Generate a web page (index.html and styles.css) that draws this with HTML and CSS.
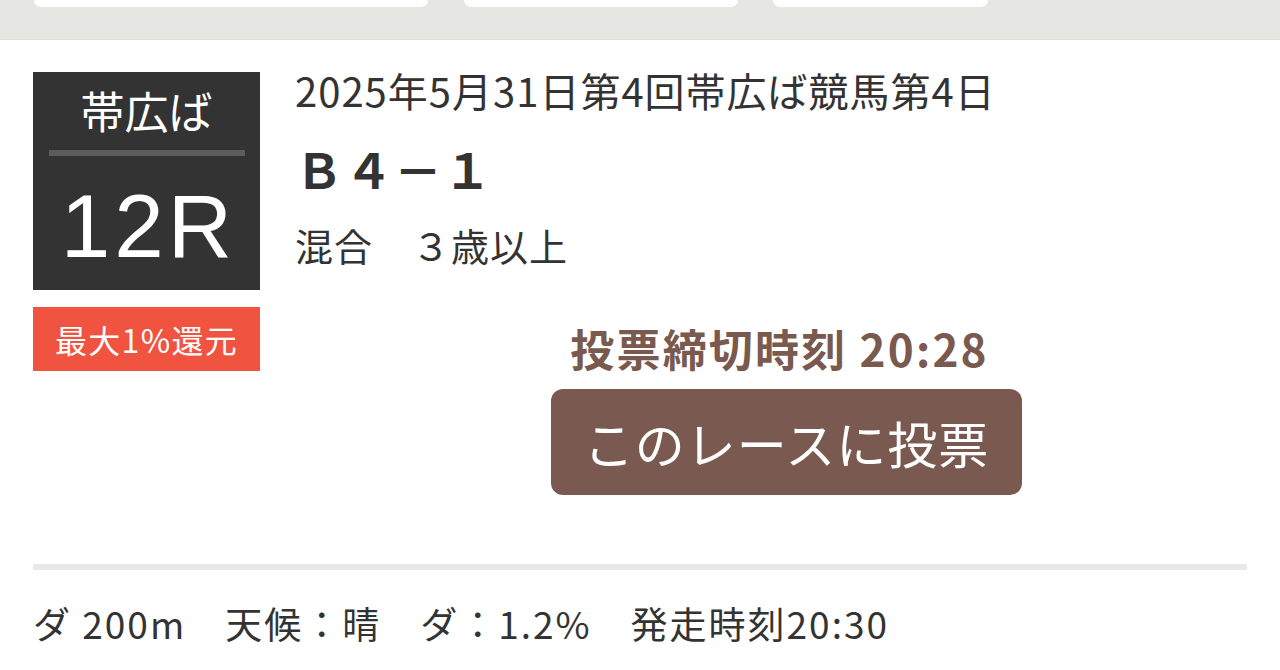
FILE: index.html
```html
<!DOCTYPE html>
<html lang="ja">
<head>
<meta charset="utf-8">
<link rel="stylesheet" href="styles.css">
</head>
<body>
<div class="topbar">
  <div class="tab tab-1"></div>
  <div class="tab tab-2"></div>
  <div class="tab tab-3"></div>
</div>
<main class="race">
  <div class="race-head">
    <div class="left-col">
      <div class="venue-card">
        <div class="venue-name">帯広ば</div>
        <div class="venue-rule"></div>
        <div class="race-no">12R</div>
      </div>
      <div class="badge">最大1%還元</div>
    </div>
    <div class="right-col">
      <div class="race-date">2025年5月31日第4回帯広ば競馬第4日</div>
      <div class="race-title">Ｂ４－１</div>
      <div class="race-cond">混合　３歳以上</div>
      <div class="action">
        <div class="deadline">投票締切時刻 20:28</div>
        <button class="vote-btn">このレースに投票</button>
      </div>
    </div>
  </div>
  <div class="divider"></div>
  <div class="race-info">ダ 200m　天候：晴　ダ：1.2%　発走時刻20:30</div>
</main>
</body>
</html>
```
FILE: styles.css
```css
html, body {
  margin: 0;
  padding: 0;
  background: #ffffff;
}
body {
  width: 1280px;
  height: 670px;
  overflow: hidden;
  font-family: "Noto Sans CJK JP", "Noto Sans", sans-serif;
  color: #333333;
}
.topbar {
  height: 39px;
  background: #e6e6e2;
  border-bottom: 1px solid #e0e0dc;
  display: flex;
  align-items: flex-start;
  padding-left: 34px;
  gap: 36px;
}
.tab {
  height: 7px;
  background: #ffffff;
  border-radius: 0 0 10px 10px;
}
.tab-1 { width: 394px; }
.tab-2 { width: 274px; }
.tab-3 { width: 215px; margin-left: -1px; }

.race {
  padding: 0 33px;
}
.race-head {
  display: flex;
  gap: 35px;
  padding-top: 32px;
  height: 492px;
  box-sizing: border-box;
}
.left-col {
  width: 227px;
  flex: none;
}
.venue-card {
  height: 218px;
  background: #333333;
  display: flex;
  flex-direction: column;
  align-items: center;
}
.venue-name {
  color: #ffffff;
  font-size: 44px;
  line-height: 1;
  margin-top: 16px;
  height: 62px;
}
.venue-rule {
  width: 196px;
  height: 6px;
  background: #5c5c5c;
}
.race-no {
  color: #ffffff;
  font-family: "Liberation Sans", Arial, sans-serif;
  font-size: 89px;
  line-height: 1;
  margin-top: 26px;
  letter-spacing: 4px;
  margin-right: -4px;
}
.badge {
  margin-top: 17px;
  height: 64px;
  background: #f0533f;
  color: #ffffff;
  font-size: 32px;
  letter-spacing: 1.3px;
  line-height: 64px;
  text-align: center;
}
.right-col {
  flex: 1;
  display: flex;
  flex-direction: column;
}
.race-date {
  font-size: 40px;
  line-height: 48px;
  margin-top: -6px;
  letter-spacing: 1px;
}
.race-title {
  font-size: 48px;
  font-weight: bold;
  line-height: 56px;
  margin-top: 26px;
  letter-spacing: 1.5px;
}
.race-cond {
  font-size: 38px;
  line-height: 48px;
  margin-top: 25px;
  letter-spacing: 1px;
}
.action {
  margin-left: 256px;
  width: 471px;
  display: flex;
  flex-direction: column;
  align-items: center;
  margin-top: 53px;
}
.deadline {
  color: #7a5a4e;
  font-size: 44px;
  font-weight: bold;
  line-height: 52px;
  letter-spacing: 2.2px;
  margin-left: -14px;
}
.vote-btn {
  margin-top: 15px;
  width: 471px;
  height: 106px;
  border: none;
  border-radius: 12px;
  background: #7a5a50;
  color: #ffffff;
  font-family: "Noto Sans CJK JP", "Noto Sans", sans-serif;
  font-size: 50px;
  letter-spacing: 1px;
  padding: 0;
}
.divider {
  height: 6px;
  background: #e8e8e8;
  margin-top: 32px;
}
.race-info {
  font-size: 37px;
  line-height: 50px;
  margin-top: 28px;
  letter-spacing: 2px;
}
```
